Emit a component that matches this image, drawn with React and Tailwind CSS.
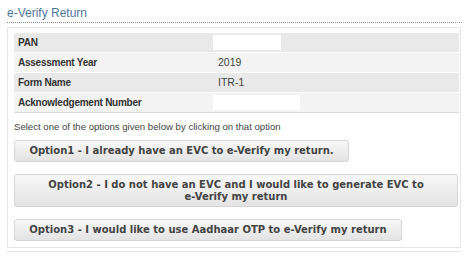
import React from "react";

const sans = { fontFamily: '"Liberation Sans", Arial, sans-serif' };

function Row({ label, value, dark, last, mask }) {
  return (
    <div
      className={`grid grid-cols-[199px_1fr] h-[20px] items-center border-b ${
        last ? "border-[#dcdcdc]" : "border-white"
      } ${dark ? "bg-[#e9e9e9]" : "bg-[#f3f3f3]"}`}
    >
      <div className="pl-[4px] text-[10px] font-bold text-[#333] tracking-[-0.25px] leading-none">{label}</div>
      <div className="relative h-full flex items-center pl-[5px] text-[10.5px] text-[#444] leading-none">
        {mask ? <div className={`bg-white h-[15px] ${mask}`} /> : value}
      </div>
    </div>
  );
}

function Btn({ children, w, h }) {
  return (
    <div
      className={`${w} ${h} flex items-center justify-center text-center rounded-[3px] border border-[#d6d6d6] bg-gradient-to-b from-[#f8f8f8] to-[#e3e3e3] text-[#444] text-[10px] font-bold leading-[12px]`}
      style={{ fontFamily: '"DejaVu Sans", Verdana, sans-serif' }}
    >
      {children}
    </div>
  );
}

export default function App() {
  return (
    <div className="w-[474px] h-[258px] bg-white pl-[7px] pt-[5px] overflow-hidden" style={sans}>
      <div className="text-[12px] leading-[16px] text-[#4f779c]">e-Verify Return</div>
      <div className="w-[455px] border-b border-dotted border-[#8a8a8a] mt-[1px]" />
      <div className="w-[454px] h-[221px] mt-[4px] border border-[#e6e6e6] pl-[6px] pt-[5px]">
        <div className="w-[445px]">
          <Row label="PAN" dark mask="w-[68px] -ml-[5px]" />
          <Row label="Assessment Year" value="2019" />
          <Row label="Form Name" value="ITR-1" dark />
          <Row label="Acknowledgement Number" last mask="w-[87px] -ml-[5px]" />
        </div>
        <div className="mt-[8px] text-[9.6px] leading-[12px] text-[#444]">
          Select one of the options given below by clicking on that option
        </div>
        <div className="mt-[7px] flex flex-col gap-[12px]">
          <Btn w="w-[335px]" h="h-[22px]">Option1 - I already have an EVC to e-Verify my return.</Btn>
          <Btn w="w-[444px]" h="h-[33px]">
            <span>
              Option2 - I do not have an EVC and I would like to generate EVC to
              <br />
              e-Verify my return
            </span>
          </Btn>
          <Btn w="w-[388px]" h="h-[22px]">Option3 - I would like to use Aadhaar OTP to e-Verify my return</Btn>
        </div>
      </div>
      <div className="w-[454px] border-b border-[#e6e6e6] mt-[3px]" />
    </div>
  );
}
